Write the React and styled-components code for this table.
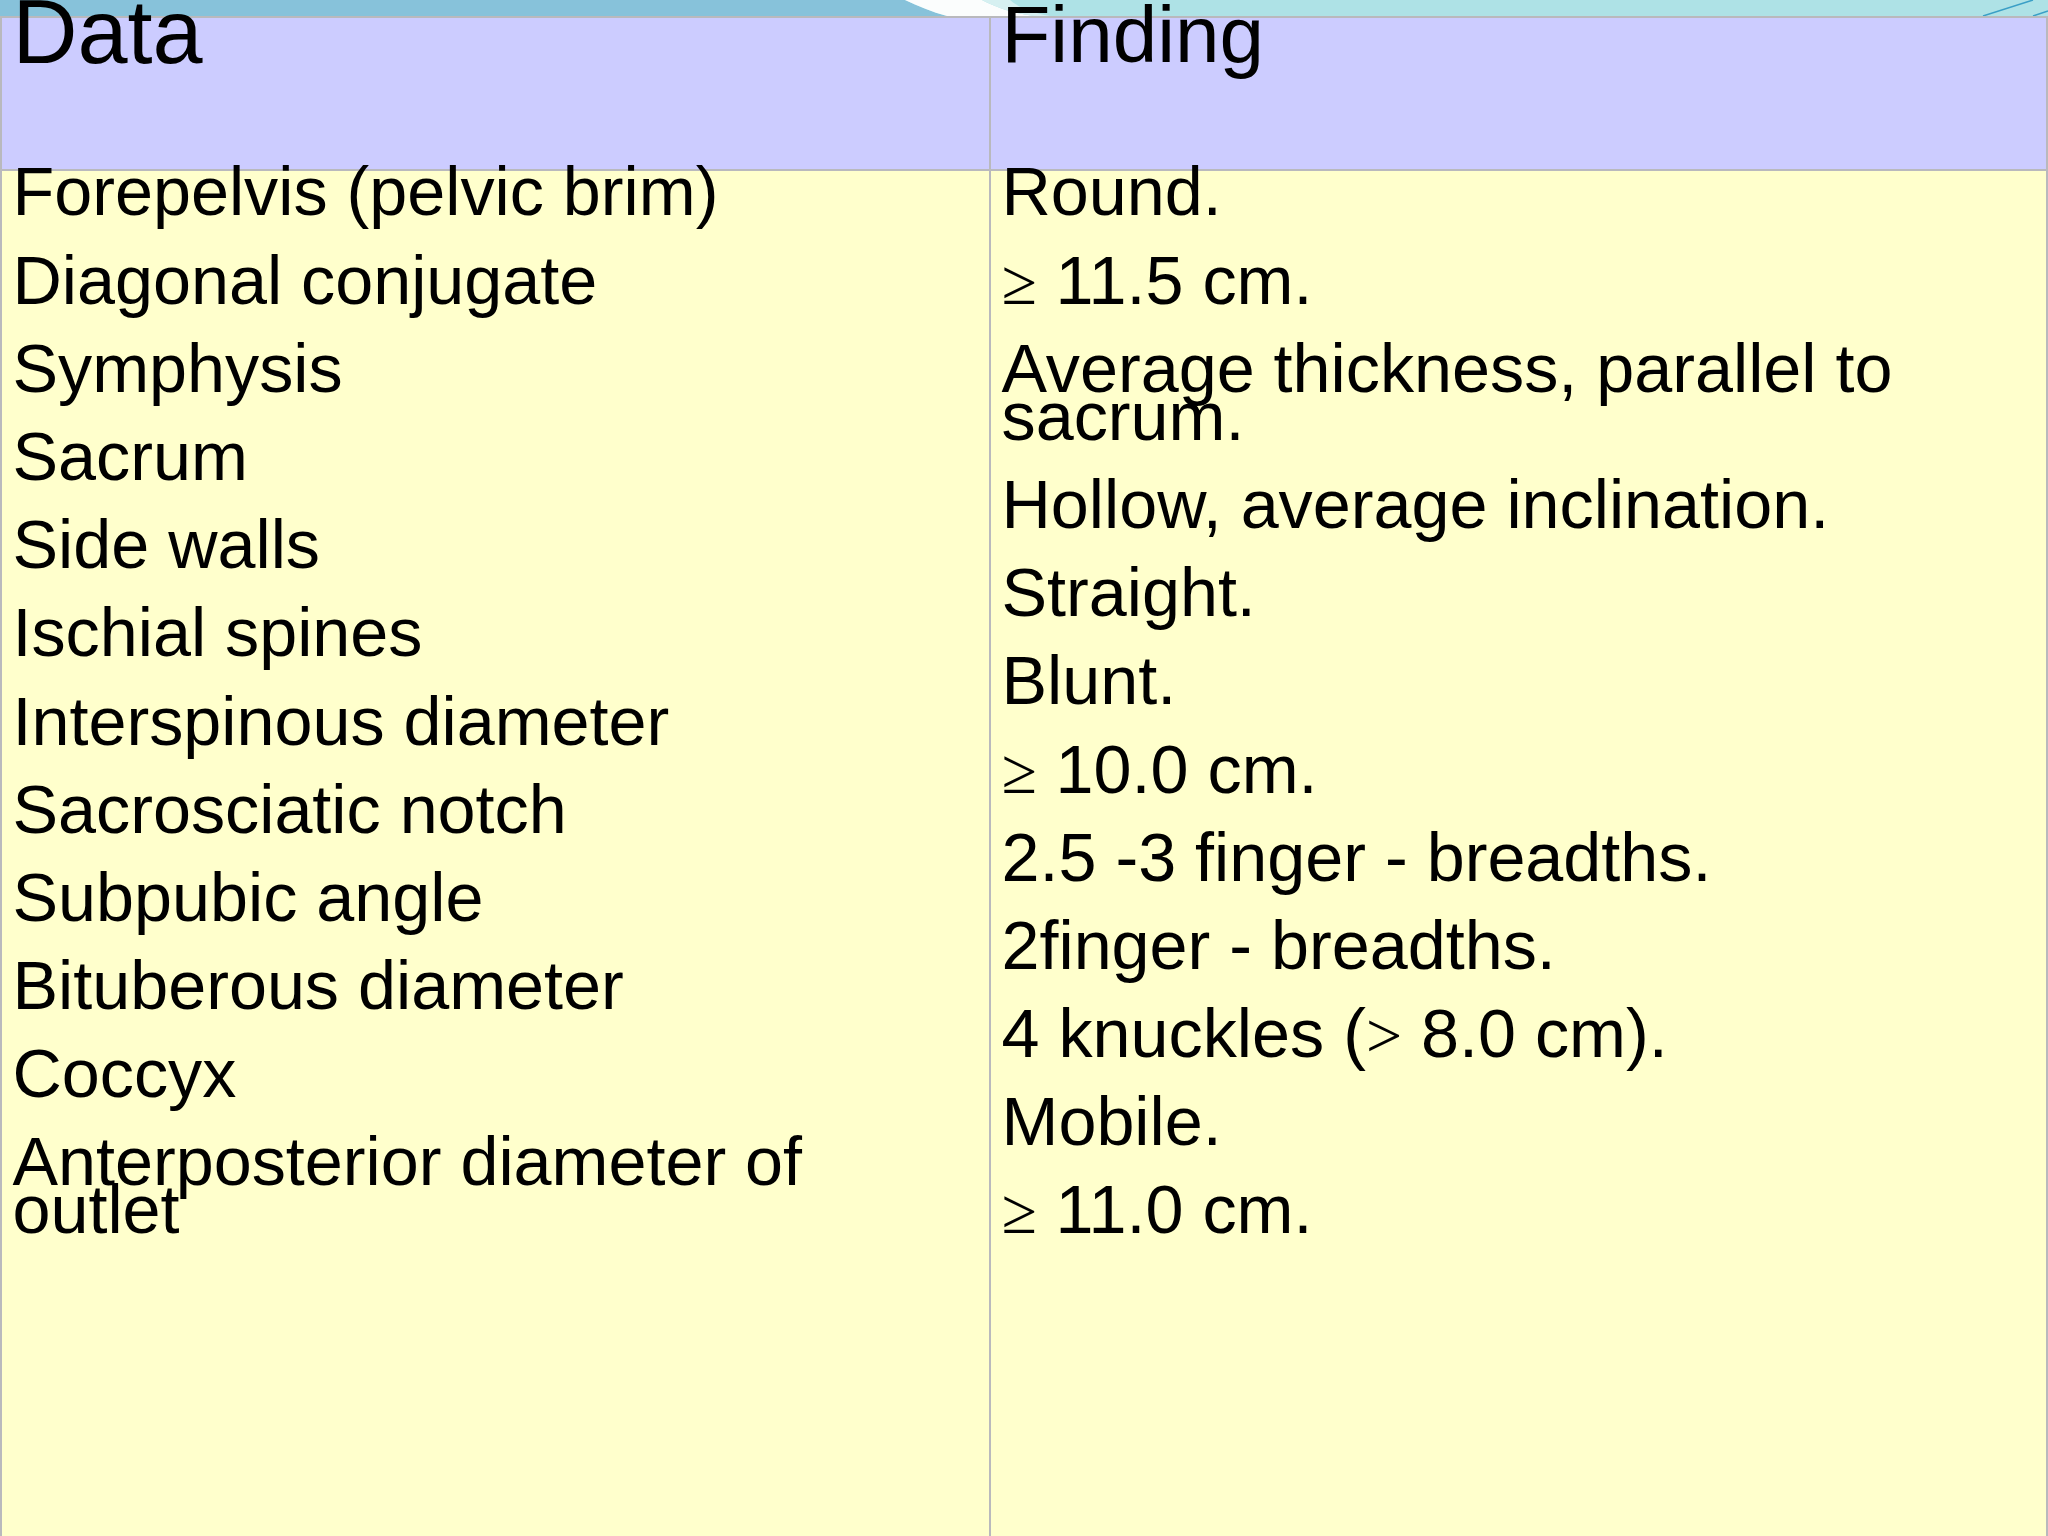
import React from 'react';
import styled, { createGlobalStyle } from 'styled-components';

const GlobalStyle = createGlobalStyle`
  html, body {
    margin: 0;
    padding: 0;
    background: #ffffcc;
  }

  body {
    font-family: 'Liberation Sans', Arial, sans-serif;
    color: #000;
  }
`;

const rows = [
  { data: 'Forepelvis (pelvic brim)', finding: 'Round.' },
  { data: 'Diagonal conjugate', finding: [['sym', '≥'], ' 11.5 cm.'] },
  { data: 'Symphysis', finding: 'Average thickness, parallel to sacrum.' },
  { data: 'Sacrum', finding: 'Hollow, average inclination.' },
  { data: 'Side walls', finding: 'Straight.' },
  { data: 'Ischial spines', finding: 'Blunt.' },
  { data: 'Interspinous diameter', finding: [['sym', '≥'], ' 10.0 cm.'] },
  { data: 'Sacrosciatic notch', finding: '2.5 -3 finger - breadths.' },
  { data: 'Subpubic angle', finding: '2finger - breadths.' },
  { data: 'Bituberous diameter', finding: ['4 knuckles (', ['sym', '>'], ' 8.0 cm).'] },
  { data: 'Coccyx', finding: 'Mobile.' },
  { data: 'Anterposterior diameter of outlet', finding: [['sym', '≥'], ' 11.0 cm.'] },
];

const Slide = styled.div`
  display: flex;
  flex-direction: column;
  width: 2048px;
  height: 1536px;
  overflow: hidden;
`;

const Strip = styled.svg`
  display: block;
  width: 100%;
  height: 16px;
  flex: none;
`;

const Table = styled.div`
  flex: 1;
  display: grid;
  grid-template-columns: 987px 1fr;
  grid-template-rows: 151px 1fr;
  gap: 2px;
  padding: 2px 2px 0 2px;
  background: #b9b9bd;
`;

const Cell = styled.div`
  background: ${(p) => (p.$head ? '#ccccff' : '#ffffcc')};
  padding: 0 20px 0 10.5px;
  min-width: 0;
`;

// header baseline sits at y≈63 whatever the size, so the top offset follows the size
const HeadText = styled.p`
  margin: ${(p) => (p.$size === 90 ? '-10.5px' : '-7px')} 0 0 0;
  font-size: ${(p) => p.$size}px;
  line-height: 48px;
`;

const Para = styled.p`
  margin: 40.2px 0 0 0;
  font-size: 68.3px;
  line-height: 48px;

  &:first-child {
    margin-top: -3.6px;
  }
`;

const Sym = styled.span`
  font-family: 'Liberation Serif', 'Times New Roman', serif;
  font-size: 64px;
  line-height: 0;
`;

const renderText = (value) => {
  if (typeof value === 'string') return value;
  return value.map((part, i) =>
    Array.isArray(part) ? <Sym key={i}>{part[1]}</Sym> : <React.Fragment key={i}>{part}</React.Fragment>
  );
};

const TopStrip = () => (
  <Strip viewBox="0 0 2048 16" preserveAspectRatio="none">
    <rect x="0" y="0" width="2048" height="16" fill="#aee2e6" />
    <path d="M0 0 H905 C918 6 932 12 947 16 H0 Z" fill="#87c2da" />
    <path d="M905 0 H982 C995 7 1012 13 1034 16 H947 C932 12 918 6 905 0 Z" fill="#fbfdfd" />
    <path d="M982 0 H1010 C1018 7 1030 12 1050 16 H1034 C1012 13 995 7 982 0 Z" fill="#d6f0f1" />
    <path d="M1983 16 L2033 0" stroke="#3a9fc6" strokeWidth="1.5" fill="none" />
    <path d="M2033 16 L2048 11" stroke="#3a9fc6" strokeWidth="1.5" fill="none" />
  </Strip>
);

export default function App() {
  return (
    <Slide>
      <GlobalStyle />
      <TopStrip />
      <Table>
        <Cell $head>
          <HeadText $size={90}>Data</HeadText>
        </Cell>
        <Cell $head>
          <HeadText $size={80}>Finding</HeadText>
        </Cell>
        <Cell>
          {rows.map((row, i) => (
            <Para key={i}>{row.data}</Para>
          ))}
        </Cell>
        <Cell>
          {rows.map((row, i) => (
            <Para key={i}>{renderText(row.finding)}</Para>
          ))}
        </Cell>
      </Table>
    </Slide>
  );
}
